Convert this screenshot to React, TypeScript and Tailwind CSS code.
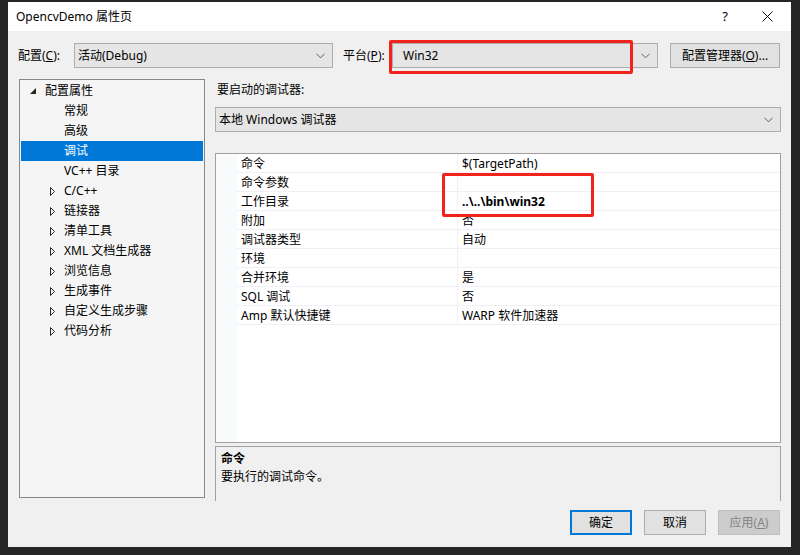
import React from 'react';

const font = { fontFamily: '"Noto Sans", "Noto Sans CJK SC", sans-serif' };

const Chevron: React.FC = () => (
  <svg width="9" height="6" viewBox="0 0 9 6" className="shrink-0">
    <path d="M0.5 0.8 L4.5 4.8 L8.5 0.8" fill="none" stroke="#606060" strokeWidth="1" />
  </svg>
);

const Combo: React.FC<{ text: string; className?: string }> = ({ text, className }) => (
  <div
    className={`h-[25px] bg-[#e5e5e5] border border-[#adadad] flex items-center justify-between pl-[3px] pr-[7px] text-[12px] text-black ${className ?? ''}`}
  >
    <span>{text}</span>
    <Chevron />
  </div>
);

// filled corner arrow of an expanded node
const Expanded: React.FC = () => (
  <svg width="6" height="6" viewBox="0 0 6 6" className="shrink-0">
    <path d="M6 0 L6 6 L0 6 Z" fill="#262626" />
  </svg>
);

// hollow arrow of a collapsed node
const Collapsed: React.FC = () => (
  <svg width="5" height="9" viewBox="0 0 5 9" className="shrink-0">
    <path d="M0.5 0.5 L4.5 4.5 L0.5 8.5 Z" fill="none" stroke="#262626" strokeWidth="1" />
  </svg>
);

type Node = { label: string; level: 0 | 1; arrow?: 'open' | 'closed'; selected?: boolean };

const tree: Node[] = [
  { label: '配置属性', level: 0, arrow: 'open' },
  { label: '常规', level: 1 },
  { label: '高级', level: 1 },
  { label: '调试', level: 1, selected: true },
  { label: 'VC++ 目录', level: 1 },
  { label: 'C/C++', level: 1, arrow: 'closed' },
  { label: '链接器', level: 1, arrow: 'closed' },
  { label: '清单工具', level: 1, arrow: 'closed' },
  { label: 'XML 文档生成器', level: 1, arrow: 'closed' },
  { label: '浏览信息', level: 1, arrow: 'closed' },
  { label: '生成事件', level: 1, arrow: 'closed' },
  { label: '自定义生成步骤', level: 1, arrow: 'closed' },
  { label: '代码分析', level: 1, arrow: 'closed' },
];

const props: { name: string; value: string; bold?: boolean }[] = [
  { name: '命令', value: '$(TargetPath)' },
  { name: '命令参数', value: '' },
  { name: '工作目录', value: '..\\..\\bin\\win32', bold: true },
  { name: '附加', value: '否' },
  { name: '调试器类型', value: '自动' },
  { name: '环境', value: '' },
  { name: '合并环境', value: '是' },
  { name: 'SQL 调试', value: '否' },
  { name: 'Amp 默认快捷键', value: 'WARP 软件加速器' },
];

const TreeRow: React.FC<{ node: Node }> = ({ node }) => {
  const sel = node.selected ? 'bg-[#0078d7] text-white' : 'text-black';
  return (
    <div className={`h-[20px] flex items-center relative ${sel}`}>
      {node.level === 0 ? (
        <div className="w-[24px] pl-[9px] flex items-center">
          <Expanded />
        </div>
      ) : (
        <div className="w-[43px] pl-[29px] flex items-center">{node.arrow === 'closed' && <Collapsed />}</div>
      )}
      <span className="text-[12px] leading-none">{node.label}</span>
    </div>
  );
};

const Button: React.FC<{ children: React.ReactNode; variant?: 'default' | 'primary' | 'disabled' }> = ({
  children,
  variant = 'default',
}) => {
  const styles = {
    default: 'border border-[#adadad] bg-[#e1e1e1] text-black',
    primary: 'border-2 border-[#0078d7] bg-[#e1e1e1] text-black',
    disabled: 'border border-[#bfbfbf] bg-[#cccccc] text-[#838383]',
  }[variant];
  return (
    <div className={`w-[62px] h-[25px] flex items-center justify-center text-[12px] ${styles}`}>{children}</div>
  );
};

export default function App() {
  return (
    <div className="w-[800px] h-[555px] bg-[#262626] pt-[2px] pl-[8px] overflow-hidden" style={font}>
      <div className="relative w-[783px] h-[545px] bg-[#f0f0f0] flex flex-col">
        {/* title bar */}
        <div className="h-[29px] bg-white flex items-center pl-[8px] shrink-0">
          <span className="text-[12px] text-black">OpencvDemo 属性页</span>
          <span className="ml-auto text-[13px] text-black mr-[34px]">?</span>
          <svg width="11" height="11" viewBox="0 0 11 11" className="mr-[18px]">
            <path d="M0.5 0.5 L10.5 10.5 M10.5 0.5 L0.5 10.5" stroke="#111" strokeWidth="1" />
          </svg>
        </div>

        {/* configuration / platform */}
        <div className="mt-[12px] h-[25px] flex items-center pl-[10px] text-[12px] text-black shrink-0">
          <span className="w-[56px]">
            配置(<u>C</u>):
          </span>
          <Combo text="活动(Debug)" className="w-[259px]" />
          <span className="ml-[10px] w-[49px]">
            平台(<u>P</u>):
          </span>
          <Combo text="Win32" className="w-[266px] pl-[10px]" />
          <div className="ml-[12px] w-[110px] h-[25px] border border-[#adadad] bg-[#e1e1e1] flex items-center justify-center">
            配置管理器(<u>O</u>)...
          </div>
        </div>

        {/* main area */}
        <div className="mt-[11px] flex pl-[11px] gap-[10px] shrink-0">
          <div className="w-[186px] h-[419px] border border-[#828790] bg-[#f5f5f5] p-[1px]">
            {tree.map((n) => (
              <TreeRow key={n.label} node={n} />
            ))}
          </div>

          <div className="w-[566px] flex flex-col text-[12px] text-black">
            <div className="h-[22px] flex items-center pl-[2px]">要启动的调试器:</div>
            <Combo text="本地 Windows 调试器" className="mt-[6px] w-[566px]" />

            <div className="mt-[21px] h-[290px] border border-[#a0a0a0] bg-white flex">
              <div className="w-[21px] bg-[#f9fafc]" />
              <div className="flex-1">
                {props.map((p) => (
                  <div key={p.name} className="h-[19px] flex border-b border-[#f0f0f6]">
                    <div className="w-[221px] pl-[4px] pt-[2px] flex items-center border-r border-[#f0f0f6]">
                      {p.name}
                    </div>
                    <div className={`flex-1 pl-[4px] pt-[2px] flex items-center ${p.bold ? 'font-bold' : ''}`}>
                      {p.value}
                    </div>
                  </div>
                ))}
              </div>
            </div>

            <div className="mt-[3px] h-[55px] border border-b-0 border-[#a0a0a0] pl-[5px] pt-[3px]">
              <div className="h-[18px] flex items-center font-bold">命令</div>
              <div className="h-[18px] flex items-center">要执行的调试命令。</div>
            </div>
          </div>
        </div>

        {/* buttons */}
        <div className="mt-[9px] flex justify-end gap-[12px] pr-[11px]">
          <Button variant="primary">确定</Button>
          <Button>取消</Button>
          <Button variant="disabled">
            应用(<u>A</u>)
          </Button>
        </div>

        {/* red markers */}
        <div className="absolute left-[381px] top-[38px] w-[244px] h-[34px] border-[3px] border-[#f2231d] rounded-[2px]" />
        <div className="absolute left-[434px] top-[171px] w-[152px] h-[44px] border-[3px] border-[#f2231d] rounded-[2px]" />
      </div>
    </div>
  );
}
